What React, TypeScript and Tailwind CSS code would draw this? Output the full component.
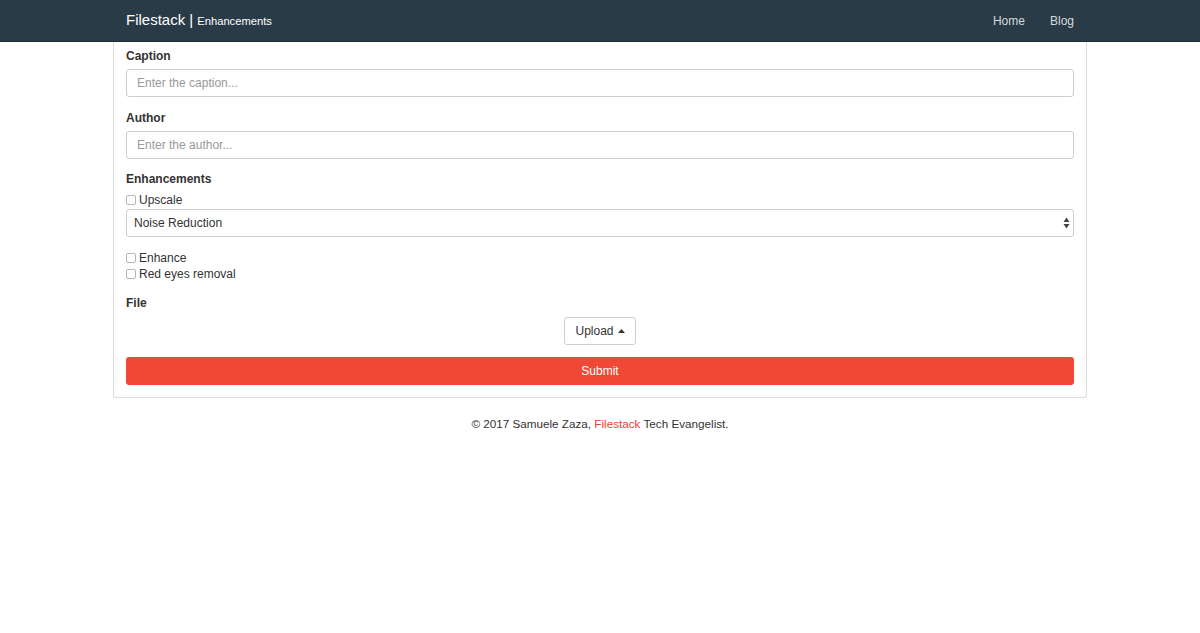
import React, { useState } from "react";

const Check = ({ label }: { label: string }) => {
  const [on, setOn] = useState(false);
  return (
    <label className="flex h-[18px] items-center gap-[3px] text-[12px] text-[#333]">
      <input
        type="checkbox"
        checked={on}
        onChange={() => setOn(!on)}
        className="m-0 h-[10px] w-[10px] appearance-none rounded-[2px] border border-[#b5b5b5] bg-white checked:bg-[#3a8ee6]"
      />
      {label}
    </label>
  );
};

const App = () => {
  return (
    <div className="min-h-screen bg-white font-['Liberation_Sans',Arial,sans-serif] text-[#333]">
      <nav className="h-[42px] border-b border-[#1f2d39] bg-[#2a3b48]">
        <div className="mx-auto flex h-full w-[974px] items-center justify-between px-[13px]">
          <div className="flex items-baseline text-white">
            <span className="text-[15px]">Filestack |</span>
            <span className="ml-[4px] text-[11.2px]">Enhancements</span>
          </div>
          <div className="flex items-center gap-[25px] pl-[3px] text-[12px] text-[#d4d9de]">
            <a>Home</a>
            <a>Blog</a>
          </div>
        </div>
      </nav>

      <div className="mx-auto w-[974px] rounded-b-[3px] border border-t-0 border-[#dcdcdc] px-[12px] pb-[12px] pt-[5px]">
        <label className="block text-[12px] font-bold leading-[18px]">Caption</label>
        <input
          placeholder="Enter the caption..."
          className="mt-[4px] block h-[28px] w-full rounded-[3px] border border-[#cfcfcf] px-[10px] text-[12px] outline-none placeholder:text-[#999]"
        />

        <label className="mt-[12px] block text-[12px] font-bold leading-[18px]">Author</label>
        <input
          placeholder="Enter the author..."
          className="mt-[4px] block h-[28px] w-full rounded-[3px] border border-[#cfcfcf] px-[10px] text-[12px] outline-none placeholder:text-[#999]"
        />

        <label className="mt-[11px] block text-[12px] font-bold leading-[18px]">Enhancements</label>
        <div className="mt-[3px]">
          <Check label="Upscale" />
        </div>
        <div className="relative">
          <select className="block h-[28px] w-full appearance-none rounded-[3px] border border-[#cfcfcf] bg-white px-[7px] text-[12px] text-[#333] outline-none">
            <option>Noise Reduction</option>
          </select>
          <svg
            className="pointer-events-none absolute right-[4px] top-[8px]"
            width="7"
            height="12"
            viewBox="0 0 7 12"
          >
            <path d="M3.5 0.5 L6.5 5 H0.5 Z" fill="#444" />
            <path d="M3.5 11.5 L6.5 7 H0.5 Z" fill="#444" />
          </svg>
        </div>
        <div className="mt-[12px]">
          <Check label="Enhance" />
          <div className="-mt-[2px]">
            <Check label="Red eyes removal" />
          </div>
        </div>

        <label className="mt-[11px] block text-[12px] font-bold leading-[18px]">File</label>
        <div className="mt-[5px] flex justify-center">
          <button className="flex h-[28px] items-center gap-[4px] rounded-[3px] border border-[#cfcfcf] bg-white px-[10px] text-[12px] text-[#333]">
            Upload
            <svg width="7" height="4" viewBox="0 0 7 4">
              <path d="M3.5 0 L7 4 H0 Z" fill="#333" />
            </svg>
          </button>
        </div>

        <button className="mt-[12px] block h-[28px] w-full rounded-[3px] bg-[#f04834] text-[12px] text-white">
          Submit
        </button>
      </div>

      <footer className="mt-[17px] text-center text-[11.7px] text-[#333]">
        © 2017 Samuele Zaza, <a className="text-[#ef3e2f]">Filestack</a> Tech Evangelist.
      </footer>
    </div>
  );
};

export default App;
